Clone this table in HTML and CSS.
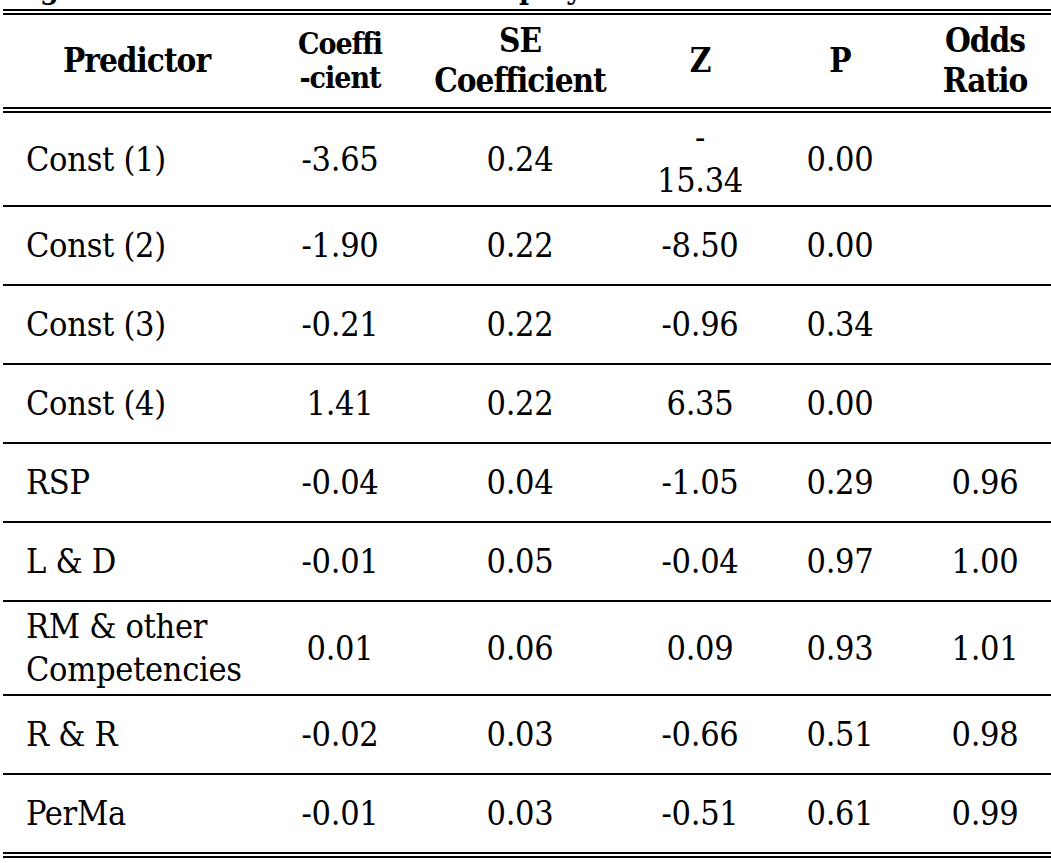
FILE: index.html
```html
<!DOCTYPE html>
<html lang="en">
<head>
<meta charset="utf-8">
<title>Logistic Model Results</title>
<link rel="stylesheet" href="styles.css">
</head>
<body>
<div class="page">
  <p class="title">Logistic Model Results for the Employee Performance</p>
  <table class="results">
    <colgroup>
      <col class="c-pred">
      <col class="c-coef">
      <col class="c-se">
      <col class="c-z">
      <col class="c-p">
      <col class="c-odds">
    </colgroup>
    <thead>
      <tr>
        <th>Predictor</th>
        <th class="small">Coeffi<br>-cient</th>
        <th>SE<br>Coefficient</th>
        <th>Z</th>
        <th>P</th>
        <th>Odds<br>Ratio</th>
      </tr>
    </thead>
    <tbody>
      <tr><td class="name">Const (1)</td><td>-3.65</td><td>0.24</td><td>-<br>15.34</td><td>0.00</td><td></td></tr>
      <tr><td class="name">Const (2)</td><td>-1.90</td><td>0.22</td><td>-8.50</td><td>0.00</td><td></td></tr>
      <tr><td class="name">Const (3)</td><td>-0.21</td><td>0.22</td><td>-0.96</td><td>0.34</td><td></td></tr>
      <tr><td class="name">Const (4)</td><td>1.41</td><td>0.22</td><td>6.35</td><td>0.00</td><td></td></tr>
      <tr><td class="name">RSP</td><td>-0.04</td><td>0.04</td><td>-1.05</td><td>0.29</td><td>0.96</td></tr>
      <tr><td class="name">L &amp; D</td><td>-0.01</td><td>0.05</td><td>-0.04</td><td>0.97</td><td>1.00</td></tr>
      <tr><td class="name">RM &amp; other<br>Competencies</td><td>0.01</td><td>0.06</td><td>0.09</td><td>0.93</td><td>1.01</td></tr>
      <tr><td class="name">R &amp; R</td><td>-0.02</td><td>0.03</td><td>-0.66</td><td>0.51</td><td>0.98</td></tr>
      <tr class="last"><td class="name">PerMa</td><td>-0.01</td><td>0.03</td><td>-0.51</td><td>0.61</td><td>0.99</td></tr>
    </tbody>
  </table>
</div>
</body>
</html>
```

FILE: styles.css
```css
html, body {
  margin: 0;
  padding: 0;
  background: #fff;
  overflow: hidden;
}

.page {
  padding-left: 3px;
  color: #000;
  font-family: "DejaVu Serif Condensed", "DejaVu Serif", serif;
  font-stretch: condensed;
}

.title {
  margin: -29px 0 2px 0;
  font-size: 30px;
  line-height: 36px;
  font-weight: bold;
  white-space: nowrap;
}

.results {
  border-collapse: separate;
  border-spacing: 0;
  table-layout: fixed;
  width: 1057px;
}

.c-pred { width: 267px; }
.c-coef { width: 140px; }
.c-se   { width: 220px; }
.c-z    { width: 140px; }
.c-p    { width: 140px; }
.c-odds { width: 150px; }

.results th {
  border-top: 6px double #000;
  border-bottom: 6px double #000;
  height: 92px;
  padding: 0;
  font-size: 33px;
  line-height: 40px;
  letter-spacing: -1px;
  font-weight: bold;
  text-align: center;
  vertical-align: middle;
}

.results th.small {
  font-size: 30px;
  line-height: 34px;
}

.results td {
  border-bottom: 2px solid #000;
  height: 71px;
  padding: 3px 0;
  font-size: 34px;
  line-height: 43px;
  letter-spacing: -0.3px;
  text-align: center;
  vertical-align: middle;
}

.results td.name {
  text-align: left;
  padding-left: 23px;
}

.results tr.last td {
  border-bottom: 6px double #000;
}
```
